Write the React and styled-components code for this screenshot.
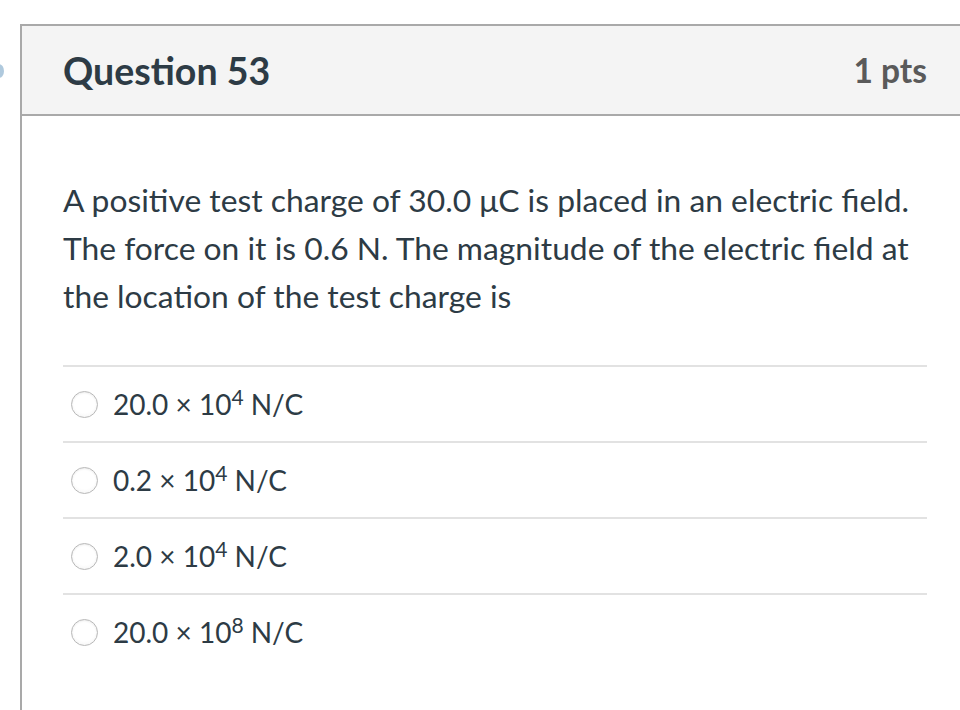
import React from 'react';
import styled, { createGlobalStyle } from 'styled-components';

const GlobalStyle = createGlobalStyle`
    html, body {
        margin: 0;
        padding: 0;
        background: #fff;
        overflow: hidden;
    }
    body {
        font-family: Lato, 'Open Sans', sans-serif;
        color: #2d3b45;
    }
`;

const Page = styled.div`
    position: relative;
    height: 710px;
    padding-top: 24px;
    box-sizing: border-box;
`;

const Marker = styled.span`
    position: absolute;
    left: -6px;
    top: 64px;
    width: 10px;
    height: 14px;
    border-radius: 50%;
    background: #9bbbd4;
    opacity: 0.8;
`;

const Card = styled.section`
    margin-left: 20px;
    height: 100%;
    border-top: 2px solid #a9a9a9;
    border-left: 2px solid #a9a9a9;
`;

const Header = styled.header`
    display: flex;
    align-items: center;
    justify-content: space-between;
    height: 88px;
    padding: 0 33px 0 41px;
    background: #f4f4f4;
    border-bottom: 2px solid #a9a9a9;
`;

const Title = styled.h2`
    margin: 0;
    font-size: 37.5px;
    font-weight: 700;
    color: #2d3b45;
`;

const Points = styled.span`
    font-size: 33.5px;
    font-weight: 700;
    color: #5a5a5a;
`;

const Body = styled.div`
    padding: 60px 33px 0 41px;
`;

const Prompt = styled.p`
    margin: 0 0 45px;
    font-size: 31.8px;
    line-height: 48px;
`;

const Answers = styled.ul`
    list-style: none;
    margin: 0;
    padding: 0;
`;

const Answer = styled.li`
    display: flex;
    align-items: center;
    height: 74px;
    border-top: 2px solid #e2e2e2;
    font-size: 28px;
`;

const Radio = styled.span`
    flex: none;
    width: 25px;
    height: 25px;
    margin: 0 15px 0 8px;
    border-radius: 50%;
    border: 1px solid #b8b8b8;
    background: radial-gradient(circle at 50% 40%, #ffffff 55%, #f0f0f0 100%);
    box-shadow: inset 0 1px 2px rgba(0, 0, 0, 0.08);
`;

const Sup = styled.sup`
    font-size: 0.75em;
    line-height: 0;
    vertical-align: 0.5em;
`;

const answers = [
    { id: 1, base: '20.0', exp: '4' },
    { id: 2, base: '0.2', exp: '4' },
    { id: 3, base: '2.0', exp: '4' },
    { id: 4, base: '20.0', exp: '8' },
];

function App() {
    return (
        <Page>
            <GlobalStyle />
            <Marker />
            <Card>
                <Header>
                    <Title>Question 53</Title>
                    <Points>1 pts</Points>
                </Header>
                <Body>
                    <Prompt>
                        A positive test charge of 30.0 μC is placed in an electric field. The force on it is 0.6 N.
                        The magnitude of the electric field at the location of the test charge is
                    </Prompt>
                    <Answers>
                        {answers.map((a) => (
                            <Answer key={a.id}>
                                <Radio />
                                <span>
                                    {a.base} × 10<Sup>{a.exp}</Sup> N/C
                                </span>
                            </Answer>
                        ))}
                    </Answers>
                </Body>
            </Card>
        </Page>
    );
}

export default App;
